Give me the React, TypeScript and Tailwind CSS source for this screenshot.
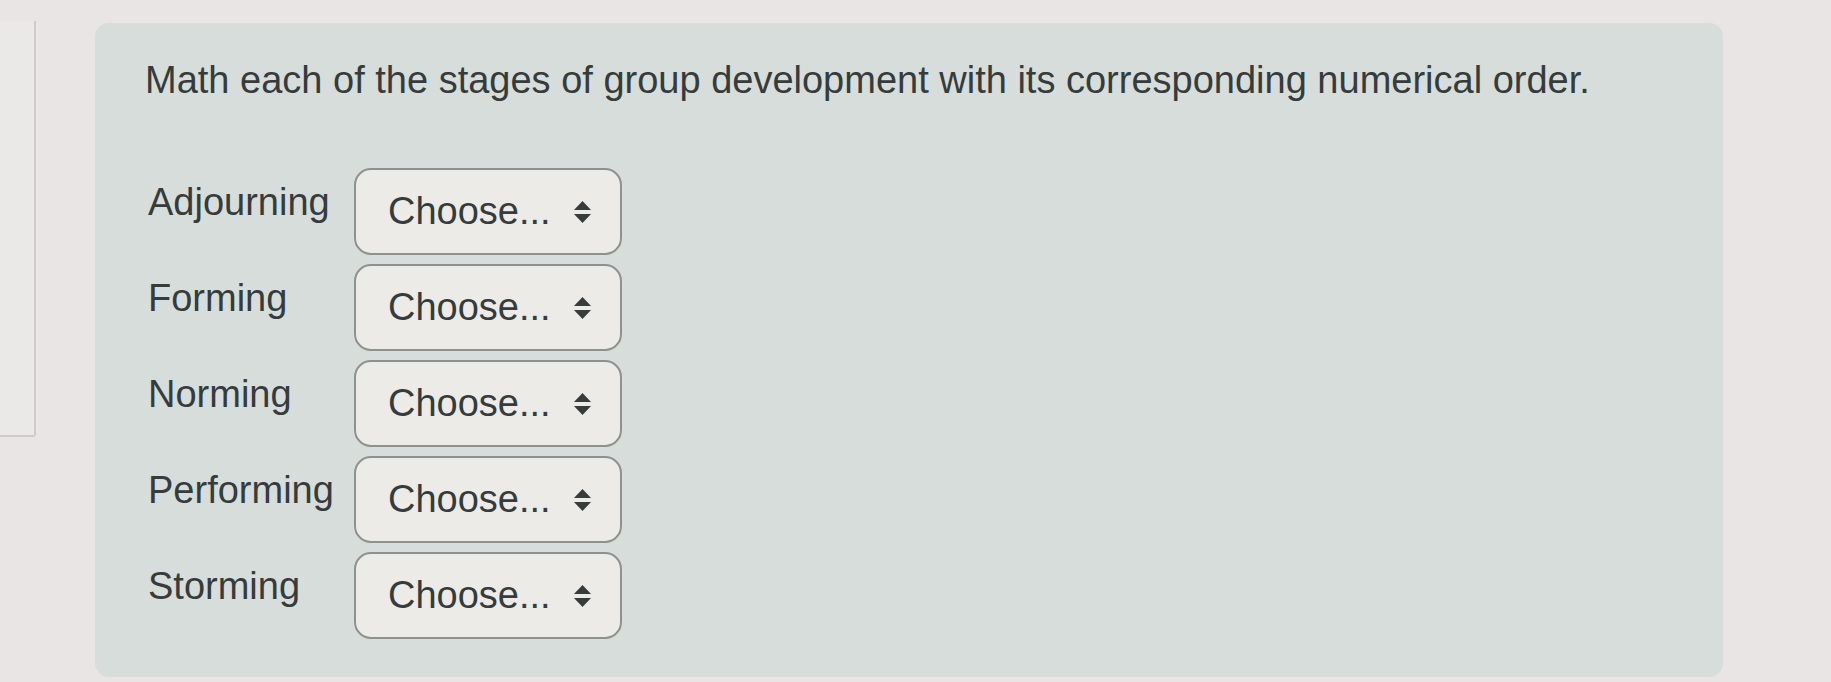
const stages = ["Adjourning", "Forming", "Norming", "Performing", "Storming"];

function UpDownArrows() {
  return (
    <svg width="19" height="24" viewBox="0 0 19 24" aria-hidden="true" className="shrink-0">
      <path d="M9.5 1 L18 10 H1 Z" fill="#363b3b" />
      <path d="M9.5 23 L18 14 H1 Z" fill="#363b3b" />
    </svg>
  );
}

function StageSelect({ id }: { id: string }) {
  return (
    <div className="relative w-[268px] h-[87px]">
      <select
        id={id}
        defaultValue=""
        className="h-full w-full appearance-none rounded-[17px] border-2 border-[#8d9290] bg-[#ecebe8] pl-[32px] pr-[70px] text-[38px] text-[#363b3b] outline-none"
      >
        <option value="">Choose...</option>
        <option value="1">1</option>
        <option value="2">2</option>
        <option value="3">3</option>
        <option value="4">4</option>
        <option value="5">5</option>
      </select>
      <div className="pointer-events-none absolute right-[30px] top-[32px]">
        <UpDownArrows />
      </div>
    </div>
  );
}

export default function App() {
  return (
    <div className="flex h-[682px] w-full overflow-hidden bg-[#e8e5e4] font-['Liberation_Sans',Arial,sans-serif] text-[#363b3b]">
      <div className="mt-[21px] h-[416px] w-[36px] shrink-0 rounded-br-[3px] border-r-2 border-b-2 border-[#cfcdcc] bg-[#ebe9e8]" />

      <div className="ml-[59px] mt-[23px] h-[654px] w-[1628px] shrink-0 rounded-[14px] bg-[#d6dddb] pl-[50px] pt-[35px]">
        <p className="text-[38px] leading-[44px]">
          Math each of the stages of group development with its corresponding numerical order.
        </p>

        <div className="mt-[66px] flex flex-col gap-[9px]">
          {stages.map((stage) => {
            const id = `stage-${stage.toLowerCase()}`;
            return (
              <div key={stage} className="flex items-start">
                <label htmlFor={id} className="w-[209px] shrink-0 pl-[3px] pt-[12px] text-[38px] leading-[44px]">
                  {stage}
                </label>
                <StageSelect id={id} />
              </div>
            );
          })}
        </div>
      </div>
    </div>
  );
}
